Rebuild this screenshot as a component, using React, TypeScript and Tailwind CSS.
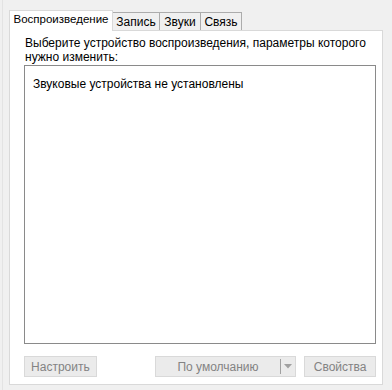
import React from 'react';

const tabs = [
  { label: 'Воспроизведение', w: 'w-[104px]' },
  { label: 'Запись', w: 'w-[47px]' },
  { label: 'Звуки', w: 'w-[41px]' },
  { label: 'Связь', w: 'w-[41px]' },
];

const App: React.FC = () => {
  return (
    <div
      className="w-[392px] h-[390px] bg-[#f0f0f0] flex text-[12px] text-black"
      style={{ fontFamily: '"Liberation Sans", Arial, sans-serif' }}
    >
      {/* thin window edge on the left */}
      <div className="w-[3px] border-r border-[#e3e3e3]" />

      <div className="flex flex-col pt-[10px] pl-[6px] w-[380px] h-[385px]">
        {/* Tabs */}
        <div className="flex items-end h-[20px] relative z-10">
          {tabs.map((t, i) =>
            i === 0 ? (
              <div
                key={t.label}
                className={`${t.w} h-[21px] -mb-px bg-white border border-b-0 border-[#d9d9d9] flex items-center justify-center leading-none pb-[2px] whitespace-nowrap text-[11.5px]`}
              >
                {t.label}
              </div>
            ) : (
              <div
                key={t.label}
                className={`${t.w} h-[18px] bg-[#f0f0f0] border border-b-0 border-l-0 border-[#acacac] flex items-center justify-center leading-none whitespace-nowrap`}
              >
                {t.label}
              </div>
            )
          )}
        </div>

        {/* Panel */}
        <div className="flex-1 bg-white border border-[#d9d9d9] flex flex-col pl-[14px] pr-[6px] pt-[5px]">
          <p className="leading-[14px] pl-px whitespace-nowrap">
            Выберите устройство воспроизведения, параметры которого
            <br />
            нужно изменить:
          </p>

          <div className="mt-[1px] h-[279px] border border-[#8a8a8a] px-[8px] pt-[9px]">
            Звуковые устройства не установлены
          </div>

          <div className="flex mt-[12px] h-[21px] text-[#838383]">
            <div className="w-[74px] bg-[#ebebeb] border border-[#d9d9d9] flex items-center justify-center">
              Настроить
            </div>
            <div className="ml-[58px] w-[144px] bg-[#ebebeb] border border-[#d9d9d9] flex items-center">
              <span className="flex-1 text-center">По умолчанию</span>
              <span className="w-[15px] h-[15px] border-l border-[#a0a0a0] flex items-center justify-center">
                <svg width="8" height="5" viewBox="0 0 8 5">
                  <path d="M0 0 H8 L4 4.5 Z" fill="#a0a0a0" />
                </svg>
              </span>
            </div>
            <div className="ml-[8px] w-[73px] bg-[#ebebeb] border border-[#d9d9d9] flex items-center justify-center">
              Свойства
            </div>
          </div>
        </div>
      </div>
    </div>
  );
};

export default App;
